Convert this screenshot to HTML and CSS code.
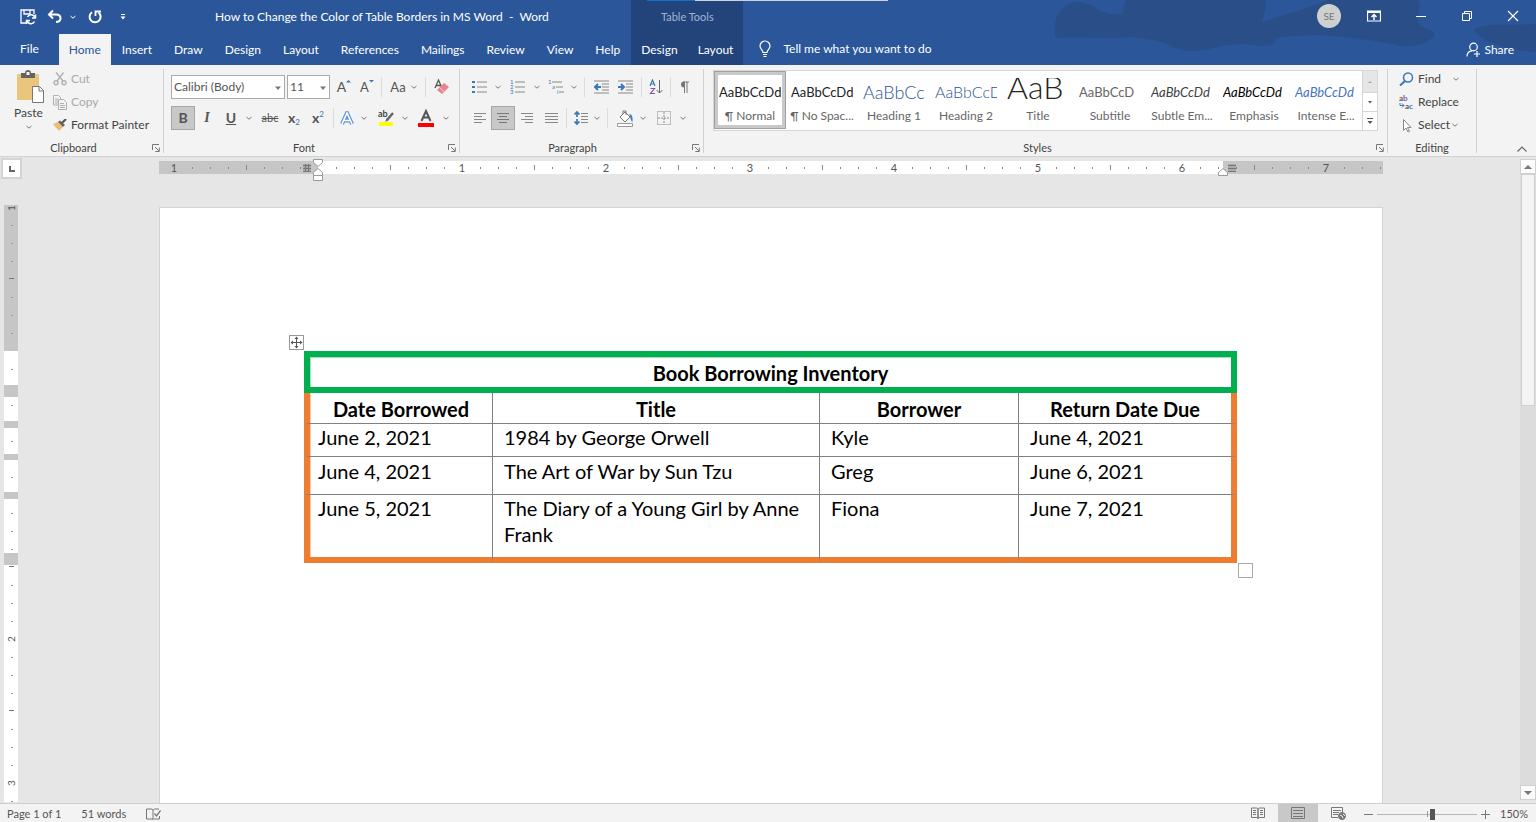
FILE: index.html
```html
<!DOCTYPE html>
<html lang="en">
<head>
<meta charset="utf-8">
<title>How to Change the Color of Table Borders in MS Word - Word</title>
<link rel="stylesheet" href="styles.css">
</head>
<body>
<svg class="defs" aria-hidden="true">
  <symbol id="chev" viewBox="0 0 8 8"><path d="M1.500 3L4 5.200 6.500 3" fill="none" stroke="currentColor" stroke-width="1"/></symbol>
  <symbol id="launch" viewBox="0 0 8 8"><path d="M.5 6V.5H7M3 3l4 4M7.300 3.500v4h-4" fill="none" stroke="#777"/></symbol>
  <symbol id="tri" viewBox="0 0 8 8"><path d="M1 2.500h6L4 6z" fill="currentColor"/></symbol>
</svg>

<header class="header">
  <svg class="clouds" width="500" height="65" aria-hidden="true">
    <path d="M20 38C15 20 25 2 42 2s22 14 40 12c14-2 26 6 24 20-20 8-60 2-86 4zM90 0h140c0 20-10 26-4 34 18 4 20 12-4 12-20-4-36 0-52 4-20 2-30 0-38-6-18-6-36-6-52-10zM216 44c4-14 10-16 6-20 20-8 40-12 70-24h90c6 14-8 20 6 28 10 2 14 6 8 10-10 10-30 10-40 6-20-4-40-6-60-8-20-2-60 0-80 8zM438 30c8-8 30-4 62-6v28c-30-2-54-10-62-22z" fill="#2b4b80" opacity=".7"/>
  </svg>
  <div class="title-bar">
    <div class="quick">
      <button aria-label="Save"><svg width="18" height="18" viewBox="0 0 18 18" fill="none" stroke="#fff" stroke-width="1.300"><path d="M7 15H2V2h13v4M5 2v4h6V2"/><path d="M16 10a4 4 0 0 0-7.500-1M8 12.500a4 4 0 0 0 7.500 1M16.500 6.500V10H13M7.500 16v-3.500H11" stroke-width="1.500"/></svg></button>
      <button aria-label="Undo"><svg width="16" height="16" viewBox="0 0 16 16" fill="none" stroke="#fff" stroke-width="2"><path d="M6 1.500L2 5.500l4 4M2.500 5.500H9c6 0 6 7.500 0 7.500"/></svg></button>
      <button class="mini" aria-label="Undo history"><svg width="8" height="8"><use href="#chev"/></svg></button>
      <button aria-label="Repeat"><svg width="16" height="16" viewBox="0 0 16 16" fill="none" stroke="#fff" stroke-width="2"><path d="M11.500 3.500A5.500 5.500 0 1 1 5 3.300"/><path d="M8.500 7V2.500H14" stroke-width="1.800"/></svg></button>
      <button class="customize" aria-label="Customize toolbar"><svg width="8" height="8" viewBox="0 0 8 8"><path d="M2 1.500h4" stroke="#fff"/><path d="M1.500 3.500h5L4 6.500z" fill="#fff"/></svg></button>
    </div>
    <h1 class="doc-title">How to Change the Color of Table Borders in MS Word &nbsp;-&nbsp; Word</h1>
  </div>
  <div class="context-title">Table Tools</div>
  <div class="window">
    <button class="avatar">SE</button>
    <button aria-label="Ribbon display options"><svg width="14" height="12" viewBox="0 0 14 12" fill="none" stroke="#fff"><path d="M.5 1h13v10H.5z" stroke-width="1.200"/><path d="M1 2h12" stroke-width="2"/><path d="M7 10V5M4.500 7L7 4.500 9.500 7" stroke-width="1.500"/></svg></button>
    <button aria-label="Minimize"><svg width="12" height="12"><path d="M1 6.500h10" stroke="#fff"/></svg></button>
    <button aria-label="Restore"><svg width="12" height="12" fill="none" stroke="#fff"><path d="M1.500 3.500h7v7h-7zM3.500 3.500v-2h7v7h-2"/></svg></button>
    <button aria-label="Close"><svg width="12" height="12"><path d="M1 1l10 10M11 1L1 11" stroke="#fff" stroke-width="1.200"/></svg></button>
  </div>
  <nav class="tabs">
    <button class="file">File</button><button class="active">Home</button><button>Insert</button><button>Draw</button><button>Design</button><button>Layout</button><button>References</button><button>Mailings</button><button>Review</button><button>View</button><button>Help</button>
  </nav>
  <nav class="tabs context-tabs"><button>Design</button><button>Layout</button></nav>
  <div class="tell">
    <label for="tell"><svg width="14" height="18" viewBox="0 0 14 18" fill="none" stroke="#fff" stroke-width="1.200"><path d="M5 12.500c0-2.500-3-3.500-3-6.500a5 5 0 0 1 10 0c0 3-3 4-3 6.500zM5 14.500h4M5.500 16.500h3"/></svg></label>
    <input id="tell" placeholder="Tell me what you want to do" aria-label="Tell me what you want to do">
    <button class="share"><svg width="15" height="16" viewBox="0 0 15 16" fill="none" stroke="#fff" stroke-width="1.200"><circle cx="7.500" cy="5" r="3.800"/><path d="M1 14.500c0-3.500 2-5.500 5-5.700M11 9v6M8 12h6"/></svg>Share</button>
  </div>
</header>

<main class="ribbon">
  <section class="group clipboard">
    <div class="group-body">
      <button class="paste"><svg width="30" height="34" viewBox="0 0 30 34"><rect x="1" y="4" width="22" height="26" rx="1" fill="#ecc57c"/><path d="M5 3h4a3 3 0 0 1 6 0h4v5H5z" fill="#646464"/><rect x="10.500" y="2" width="3" height="3" fill="#f3f3f3"/><path d="M16.500 16.500h7l4 4v12h-11z" fill="#fff" stroke="#777"/><path d="M23 16.500v4.500h4.500" fill="none" stroke="#777"/></svg><span>Paste</span><svg width="8" height="8"><use href="#chev"/></svg></button>
      <div class="stack">
        <button disabled><svg width="14" height="14" viewBox="0 0 14 14" fill="none" stroke="#b0b0b0" stroke-width="1.400"><path d="M3 .5L10 9M10.500.5L4 9"/><circle cx="3" cy="10.800" r="2"/><circle cx="11" cy="10.800" r="2"/></svg>Cut</button>
        <button disabled><svg width="14" height="15" viewBox="0 0 14 15" fill="#f3f3f3" stroke="#b0b0b0"><path d="M.5.5h5l2 2V10h-7zM2 4h3M2 6h3M2 8h3"/><path d="M5.500 4.500h5l3 3v7h-8zM7 8.500h4M7 10.500h5M7 12.500h5"/></svg>Copy</button>
        <button><svg width="14" height="12" viewBox="0 0 14 12"><path d="M0 5l5-2 5 5-4 4z" fill="#ecbb72"/><path d="M5 3l2-1.500 5 4.500-2 2z" fill="#666"/><path d="M9 4l4-4" stroke="#555" stroke-width="2.200"/></svg>Format Painter</button>
      </div>
    </div>
    <footer>Clipboard<button aria-label="Clipboard settings"><svg width="8" height="8"><use href="#launch"/></svg></button></footer>
  </section>

  <section class="group font">
    <div class="group-body rows">
      <div class="row font-top">
        <span class="combo"><select aria-label="Font"><option>Calibri (Body)</option></select><svg width="8" height="8"><use href="#tri"/></svg></span>
        <span class="combo"><select aria-label="Font size"><option>11</option></select><svg width="8" height="8"><use href="#tri"/></svg></span>
        <button aria-label="Grow font" class="glyph">A<sup><svg width="5" height="4"><path d="M0 3.500h5L2.500 1z" fill="#3a78b8"/></svg></sup></button>
        <button aria-label="Shrink font" class="glyph small">A<sup><svg width="5" height="4"><path d="M0 1h5L2.500 3.500z" fill="#3a78b8"/></svg></sup></button>
        <i class="sep"></i>
        <button class="glyph small">Aa</button><button class="mini" aria-label="Case options"><svg width="8" height="8"><use href="#chev"/></svg></button>
        <i class="sep"></i>
        <button aria-label="Clear formatting"><svg width="16" height="18" viewBox="0 0 16 18"><path d="M1 10L4.500 2 8 10M2.200 7.500h4.600" fill="none" stroke="#555" stroke-width="1.300"/><path d="M3 12l7-7 5 4-7 7z" fill="#e8828e"/><path d="M5.500 9.500l5 4.500" stroke="#f6cdd2"/></svg></button>
      </div>
      <div class="row font-bottom">
        <button class="glyph pressed"><b>B</b></button>
        <button class="glyph serif"><b><em>I</em></b></button>
        <button class="glyph"><b><u>U</u></b></button><button class="mini" aria-label="Underline options"><svg width="8" height="8"><use href="#chev"/></svg></button>
        <button class="glyph tiny"><s>abc</s></button>
        <button class="glyph small"><b>x</b><sub>2</sub></button>
        <button class="glyph small"><b>x</b><sup>2</sup></button>
        <i class="sep"></i>
        <button aria-label="Text effects"><svg width="14" height="15" viewBox="0 0 14 15"><path d="M2 13L7 2l5 11M4 9.500h6" fill="none" stroke="#5b95d3" stroke-width="4"/><path d="M2 13L7 2l5 11M4 9.500h6" fill="none" stroke="#fff" stroke-width="1.600"/></svg></button><button class="mini" aria-label="Text effect options"><svg width="8" height="8"><use href="#chev"/></svg></button>
        <button class="swatch" aria-label="Highlight"><svg width="18" height="18" viewBox="0 0 18 18"><rect x="2" y="13" width="14" height="4" fill="#ff0"/><text x="1" y="8" font-size="9" fill="#444">ab</text><path d="M16 4l-6 7" stroke="#666" stroke-width="2.500"/><path d="M10 9l2 2-4 2z" fill="#666"/></svg></button><button class="mini" aria-label="Highlight colors"><svg width="8" height="8"><use href="#chev"/></svg></button>
        <button class="swatch" aria-label="Font color"><svg width="18" height="18" viewBox="0 0 18 18"><rect x="1" y="14" width="16" height="4" fill="#f00"/><path d="M4.500 12L9 2l4.500 10M6 8.500h6" fill="none" stroke="#555" stroke-width="2"/></svg></button><button class="mini" aria-label="Font colors"><svg width="8" height="8"><use href="#chev"/></svg></button>
      </div>
    </div>
    <footer>Font<button aria-label="Font settings"><svg width="8" height="8"><use href="#launch"/></svg></button></footer>
  </section>

  <section class="group paragraph">
    <div class="group-body rows">
      <div class="row para-top">
        <button aria-label="Bullets"><svg width="16" height="14" viewBox="0 0 16 14"><path d="M0 1h3v2H0zM0 6h3v2H0zM0 11h3v2H0z" fill="#3a78b8"/><path d="M5 2h10M5 7h10M5 12h10" stroke="#888"/></svg></button><button class="mini" aria-label="Bullet options"><svg width="8" height="8"><use href="#chev"/></svg></button>
        <button aria-label="Numbering"><svg width="16" height="16" viewBox="0 0 16 16"><path d="M5 3h10M5 8h10M5 13h10" stroke="#888"/><g fill="#3a78b8" font-size="6"><text y="5">1</text><text y="10">2</text><text y="15">3</text></g></svg></button><button class="mini" aria-label="Numbering options"><svg width="8" height="8"><use href="#chev"/></svg></button>
        <button aria-label="Multilevel list"><svg width="16" height="16" viewBox="0 0 16 16"><path d="M4 3h10M8 8h7M11 13h5" stroke="#888"/><g fill="#3a78b8" font-size="6"><text y="5">1</text><text x="4" y="10">a</text><text x="9" y="15">i</text></g></svg></button><button class="mini" aria-label="List options"><svg width="8" height="8"><use href="#chev"/></svg></button>
        <i class="sep"></i>
        <button aria-label="Decrease indent"><svg width="16" height="14" viewBox="0 0 16 14"><path d="M0 1h15M8 4h7M8 7h7M8 10h7M0 13h15" stroke="#888"/><path d="M7 7H2M4 4L1 7l3 3" fill="none" stroke="#3a78b8" stroke-width="2"/></svg></button>
        <button aria-label="Increase indent"><svg width="16" height="14" viewBox="0 0 16 14"><path d="M0 1h15M8 4h7M8 7h7M8 10h7M0 13h15" stroke="#888"/><path d="M0 7h5M3 4l3 3-3 3" fill="none" stroke="#3a78b8" stroke-width="2"/></svg></button>
        <i class="sep"></i>
        <button aria-label="Sort"><svg width="14" height="16" viewBox="0 0 14 16" fill="none"><path d="M1 7l2.500-6L6 7M2 5h3" stroke="#3a78b8" stroke-width="1.200"/><path d="M1.500 9.500h4l-4 5h4.500" stroke="#8a55a5" stroke-width="1.200"/><path d="M10.500 1v13M7.500 11l3 3 3-3" stroke="#666"/></svg></button>
        <i class="sep"></i>
        <button aria-label="Show paragraph marks"><svg width="10" height="13" viewBox="0 0 10 13"><path d="M5.500 12V1M8 12V1M4 1h6" stroke="#777" fill="none"/><path d="M5 .5a3 3 0 0 0 0 6z" fill="#777"/></svg></button>
      </div>
      <div class="row para-bottom">
        <button aria-label="Align left"><svg width="12" height="12"><path d="M0 1.500h12M0 4.500h8M0 7.500h12M0 10.500h8" stroke="#888"/></svg></button>
        <button aria-label="Center" class="pressed"><svg width="12" height="12"><path d="M0 1.500h12M2 4.500h8M0 7.500h12M2 10.500h8" stroke="#777"/></svg></button>
        <button aria-label="Align right"><svg width="12" height="12"><path d="M0 1.500h12M4 4.500h8M0 7.500h12M4 10.500h8" stroke="#888"/></svg></button>
        <button aria-label="Justify"><svg width="13" height="12"><path d="M0 1.500h13M0 4.500h13M0 7.500h13M0 10.500h13" stroke="#888"/></svg></button>
        <i class="sep"></i>
        <button aria-label="Line spacing"><svg width="14" height="16" viewBox="0 0 14 16"><path d="M3 2v5M3 9v5M.500 4.500L3 2l2.500 2.500M.500 11.500L3 14l2.500-2.500" fill="none" stroke="#3a78b8" stroke-width="1.700"/><path d="M7 3.500h7M7 6.500h7M7 9.500h7M7 12.500h7" stroke="#888"/></svg></button><button class="mini" aria-label="Spacing options"><svg width="8" height="8"><use href="#chev"/></svg></button>
        <i class="sep"></i>
        <button aria-label="Shading"><svg width="17" height="17" viewBox="0 0 17 17"><path d="M3 7l5-5 5 5-5 5zM6 4V1h3v4" fill="#fff" stroke="#777"/><path d="M12 4c3 0 4 3 3.500 8C13 10 14 7 12 4z" fill="#3a78b8"/><path d="M.500 13.500h15v3H.500z" fill="#fff" stroke="#999"/></svg></button><button class="mini" aria-label="Shading colors"><svg width="8" height="8"><use href="#chev"/></svg></button>
        <button aria-label="Borders"><svg width="15" height="14" fill="none" stroke="#888"><path d="M.5.5h13v13H.500z" stroke-dasharray="1 1"/><path d="M7 1v12M1 7h12" stroke-dasharray="2 1"/></svg></button><button class="mini" aria-label="Border options"><svg width="8" height="8"><use href="#chev"/></svg></button>
      </div>
    </div>
    <footer>Paragraph<button aria-label="Paragraph settings"><svg width="8" height="8"><use href="#launch"/></svg></button></footer>
  </section>

  <section class="group styles">
    <div class="gallery">
      <button class="selected"><span class="sample">AaBbCcDd</span><span>¶ Normal</span></button>
      <button><span class="sample">AaBbCcDd</span><span>¶ No Spac...</span></button>
      <button><span class="sample h1">AaBbCc</span><span>Heading 1</span></button>
      <button><span class="sample h2">AaBbCcD</span><span>Heading 2</span></button>
      <button><span class="sample big">AaB</span><span>Title</span></button>
      <button><span class="sample sub">AaBbCcD</span><span>Subtitle</span></button>
      <button><span class="sample subtle">AaBbCcDd</span><span>Subtle Em...</span></button>
      <button><span class="sample emph">AaBbCcDd</span><span>Emphasis</span></button>
      <button><span class="sample intense">AaBbCcDd</span><span>Intense E...</span></button>
      <div class="gallery-nav">
        <button disabled aria-label="Previous styles"><svg width="8" height="8"><path d="M2 5h4L4 3z" fill="#aaa"/></svg></button>
        <button aria-label="Next styles"><svg width="8" height="8"><path d="M2 3h4L4 5.500z" fill="#555"/></svg></button>
        <button aria-label="More styles"><svg width="8" height="8"><path d="M1 1.500h6" stroke="#555"/><path d="M1.500 4h5L4 7z" fill="#555"/></svg></button>
      </div>
    </div>
    <footer>Styles<button aria-label="Style settings"><svg width="8" height="8"><use href="#launch"/></svg></button></footer>
  </section>

  <section class="group editing">
    <div class="group-body stack">
      <button><svg width="15" height="14" viewBox="0 0 15 14" fill="none" stroke="#3a78b8"><circle cx="9" cy="5.500" r="4.500" stroke-width="1.500"/><path d="M6 9l-5 4.500" stroke-width="2"/></svg>Find<svg class="far" width="8" height="8"><use href="#chev"/></svg></button>
      <button><svg width="15" height="16" viewBox="0 0 15 16"><g font-size="8" font-weight="700"><text y="7" fill="#555">a<tspan fill="#8a55a5">b</tspan></text><text x="6" y="15" fill="#555">a<tspan fill="#3a78b8">c</tspan></text></g><path d="M1 9v2.500h4M3 9.500l2 2-2 2" fill="none" stroke="#3a78b8"/></svg>Replace</button>
      <button><svg width="15" height="15" viewBox="0 0 15 15"><path d="M4.500 1.500v11l2.500-2.500 2 4 1.500-.7-2-3.800h3.500z" fill="#fff" stroke="#888"/></svg>Select<svg class="near" width="8" height="8"><use href="#chev"/></svg></button>
    </div>
    <footer>Editing</footer>
  </section>
  <div class="collapse"><button aria-label="Collapse the ribbon"><svg width="12" height="8"><path d="M1.500 6.500L6 2l4.500 4.500" fill="none" stroke="#666" stroke-width="1.200"/></svg></button></div>
</main>

<div class="work">
  <div class="side">
    <button class="tab-stop" aria-label="Tab stop"><svg width="8" height="8"><path d="M2 1v5h5" fill="none" stroke="#666" stroke-width="2"/></svg></button>
    <svg class="vruler" width="14" height="100%">
      <defs><pattern id="vt" y="2" width="14" height="144" patternUnits="userSpaceOnUse"><path d="M7 18.500h2M7 36.500h2M7 54.500h2M7 90.500h2M7 108.500h2M7 126.500h2" stroke="#999"/><path d="M5 71.500h5" stroke="#777"/></pattern></defs>
      <rect width="14" height="100%" fill="#fff"/><rect width="14" height="146" fill="#c6c6c6"/>
      <rect width="14" height="100%" fill="url(#vt)"/>
      <path d="M0 180h14v12H0zM0 216h14v7H0zM0 249h14v6H0zM0 287h14v7H0zM0 348h14v12H0z" fill="#c6c6c6"/>
      <g font-size="10" fill="#555" text-anchor="middle"><text transform="translate(11 3)rotate(-90)">1</text><text transform="translate(11 434)rotate(-90)">2</text><text transform="translate(11 578)rotate(-90)">3</text></g>
    </svg>
  </div>
  <div class="canvas">
    <svg class="hruler" width="100%" height="24">
      <defs><pattern id="ht" x="15" width="144" height="24" patternUnits="userSpaceOnUse"><path d="M18.500 7v2M36.500 7v2M54.500 7v2M90.500 7v2M108.500 7v2M126.500 7v2" stroke="#888"/><path d="M72.500 5v5" stroke="#888"/></pattern></defs>
      <rect y="1" width="100%" height="13" fill="#c6c6c6"/><rect x="159" y="1" width="905" height="13" fill="#fff"/>
      <rect y="1" width="100%" height="13" fill="url(#ht)"/>
      <g font-size="11" fill="#555" text-anchor="middle"><text x="15" y="12">1</text><text x="303" y="12">1</text><text x="447" y="12">2</text><text x="591" y="12">3</text><text x="735" y="12">4</text><text x="879" y="12">5</text><text x="1023" y="12">6</text><text x="1167" y="12">7</text></g>
      <path d="M144 4h8v8h-8zM1069 4h8v8h-8z" fill="#aaa"/><path d="M144 5.500h8M144 8.500h8M144 11.500h8M146.500 4v8M149.500 4v8M1069 5.500h8M1069 8.500h8M1069 11.500h8" stroke="#777"/>
      <path d="M154.500-.5h9v3l-4.500 4-4.500-4zM154.500 15.500v-3l4.500-4 4.500 4v3zM154.500 15.500h9v5h-9zM1059.500 15.500v-3l4.500-4 4.500 4v3z" fill="#fff" stroke="#999"/>
    </svg>
    <article class="page">
      <div class="table-wrap">
        <button class="move" aria-label="Move table"><svg width="13" height="13" viewBox="0 0 13 13"><path d="M6.500 1v11M1 6.500h11" stroke="#555"/><path d="M4.500 3l2-2.500 2 2.500zM4.500 10l2 2.500 2-2.500zM3 4.500L.5 6.500l2.500 2zM10 4.500l2.500 2-2.500 2z" fill="#555"/></svg></button>
        <table>
          <colgroup><col class="c-date"><col class="c-title"><col class="c-who"><col></colgroup>
          <thead>
            <tr class="banner"><th colspan="4">Book Borrowing Inventory</th></tr>
            <tr><th>Date Borrowed</th><th>Title</th><th>Borrower</th><th>Return Date Due</th></tr>
          </thead>
          <tbody>
            <tr><td>June 2, 2021</td><td>1984 by George Orwell</td><td>Kyle</td><td>June 4, 2021</td></tr>
            <tr class="mid"><td>June 4, 2021</td><td>The Art of War by Sun Tzu</td><td>Greg</td><td>June 6, 2021</td></tr>
            <tr class="last"><td>June 5, 2021</td><td>The Diary of a Young Girl by Anne Frank</td><td>Fiona</td><td>June 7, 2021</td></tr>
          </tbody>
        </table>
        <span class="resize"></span>
      </div>
    </article>
  </div>
  <div class="scroll">
    <button aria-label="Scroll up"><svg width="8" height="8"><path d="M0 6h8L4 2z" fill="#777"/></svg></button>
    <div class="track"><div class="thumb"></div></div>
    <button aria-label="Scroll down"><svg width="8" height="8"><path d="M0 2h8L4 6z" fill="#777"/></svg></button>
  </div>
</div>

<footer class="status">
  <span>Page 1 of 1</span><span>51 words</span>
  <button aria-label="Proofing"><svg width="15" height="12" viewBox="0 0 15 12" fill="none" stroke="#777"><path d="M7 11H.500V1H5c1.500 0 2 .5 2 1.500V12M7 2.500C7 1.500 8 1 9 1h4M8 11h5.500V8"/><path d="M8.500 5.500l2 2.500 4-5.500" stroke-width="1.300"/></svg></button>
  <div class="views">
    <button aria-label="Read mode"><svg width="14" height="12" viewBox="0 0 14 12" fill="none" stroke="#777"><path d="M.5 1H5c1.500 0 2 .5 2 1.500V11.500c0-1-1-1-2-1H.500zM13.500 1H9c-1.500 0-2 .5-2 1.500V11.500c0-1 1-1 2-1h4.500zM2 3.500h3M2 5.500h3M2 7.500h3M9 3.500h3M9 5.500h3M9 7.500h3"/></svg></button>
    <button class="on" aria-label="Print layout"><svg width="14" height="12" fill="none" stroke="#777"><path d="M.5.5h13v11H.500zM2 3.500h10M2 6.500h10M2 9.500h10"/></svg></button>
    <button aria-label="Web layout"><svg width="15" height="13" viewBox="0 0 15 13" fill="none" stroke="#777"><path d="M7 10.500H.500v-10h11V5M2 3.500h8M2 5.500h6M2 7.500h5"/><circle cx="11" cy="9" r="3.500" fill="#777"/><path d="M9 8l2 1 1 2M12 7l2 2" stroke="#eee"/></svg></button>
  </div>
  <div class="zoom">
    <button aria-label="Zoom out"><svg width="9" height="9"><path d="M0 4.500h9" stroke="#777"/></svg></button>
    <input type="range" min="0" max="100" value="56" aria-label="Zoom">
    <button aria-label="Zoom in"><svg width="9" height="9"><path d="M0 4.500h9M4.500 0v9" stroke="#777"/></svg></button>
    <span>150%</span>
  </div>
</footer>
</body>
</html>
```
FILE: styles.css
```css
* { box-sizing: border-box; }
body {
  margin: 0; height: 100vh; display: flex; flex-direction: column; overflow: hidden;
  font: 12px/16px Lato, "Open Sans", sans-serif; color: #444; background: #e6e6e6;
}
button, input, select { font: inherit; color: inherit; border: 0; background: none; padding: 0; margin: 0; }
button { display: flex; align-items: center; justify-content: center; white-space: nowrap; }
svg { flex: none; display: block; }
.defs { display: none; }
.mini { width: 8px; }

/* header */
.header {
  position: relative; display: grid; grid-template-columns: auto auto 1fr; grid-template-rows: 33px 32px;
  background: #2b579a; color: #fff;
}
.header::after {
  content: ""; position: absolute; top: 0; left: 647px; width: 241px; height: 1px;
  background: linear-gradient(90deg, #0b70cf 48px, #cbd3dd 48px);
}
.clouds { position: absolute; right: 0; top: 0; }
.title-bar { display: flex; align-items: center; padding-left: 19px; }
.quick { display: flex; align-items: center; width: 120px; gap: 10px; }
.quick .mini { margin: 0 0 0 -4px; }
.quick .customize { margin-left: 6px; }
.doc-title { flex: 1; margin: 0; font-size: 12px; font-weight: 400; text-align: left; padding-left: 76px; }
.context-title { background: #22447a; color: #a0b4d4; font-size: 11px; display: flex; align-items: center; justify-content: center; }
.window { position: relative; display: flex; align-items: center; justify-content: flex-end; padding: 0 17px 2px; gap: 34px; }
.avatar { width: 24px; height: 24px; border-radius: 50%; background: #d0d0d0; color: #777; font-size: 10px; margin-right: -8px; }
.tabs { display: flex; }
.tabs button { padding: 2px 11px 0; }
.tabs .file { padding: 0 20px; }
.tabs .active { background: #f3f3f3; color: #2b579a; margin-top: 1px; padding: 1px 10px 0; }
.context-tabs { background: #22447a; }
.context-tabs button { padding: 2px 10px 0; }
.tell { position: relative; display: flex; align-items: center; padding: 0 22px 0 15px; }
.tell input { flex: 1; padding-left: 11px; min-width: 0; }
.tell input::placeholder { color: #fff; opacity: 1; }
.share { gap: 3px; padding-top: 2px; }

/* ribbon */
.ribbon { display: flex; background: #f3f3f3; border-bottom: 1px solid #d2d2d2; height: 92px; padding: 4px 0 3px; color: #444; }
.ribbon .mini, .ribbon use { color: #777; }
.group { display: flex; flex-direction: column; border-right: 1px solid #d0d0d0; }
.group-body { flex: 1; }
.group > footer { position: relative; font-size: 11px; text-align: center; line-height: 10px; margin-top: auto; }
.group > footer button { position: absolute; right: 3px; top: 1px; }
.clipboard { width: 164px; }
.clipboard > footer { padding-right: 16px; }
.clipboard .group-body { display: flex; }
.paste { flex-direction: column; width: 57px; justify-content: flex-start; padding-top: 1px; }
.paste span { line-height: 17px; }
.paste svg:first-child { margin-left: 4px; }
.paste svg:last-child { margin-top: 2px; }
.stack { display: flex; flex-direction: column; gap: 7px; padding-top: 2px; align-items: flex-start; }
.stack button { gap: 4px; height: 16px; }
.clipboard .stack { margin-left: -4px; }
.stack button:disabled { color: #aaa; }
.rows { display: flex; flex-direction: column; gap: 7px; padding-top: 6px; }
.row { display: grid; height: 24px; align-items: center; justify-items: center; color: #555; }
.row > button { height: 24px; }
.sep { width: 1px; height: 20px; background: #dcdcdc; }
.font { width: 296px; padding-left: 7px; }
.paragraph { width: 244px; padding-left: 8px; }
.paragraph > footer { padding-right: 26px; }
.font > footer { padding-right: 22px; }
.font-top { grid-template-columns: 115px 44px 28px 18px 10px 24px 8px 14px 20px; }
.font-bottom { grid-template-columns: 24px 24px 24px 12px 30px 18px 30px 1px 26px 8px 36px 2px 40px 0; }
.para-top { grid-template-columns: 24px 12px 28px 10px 28px 8px 12px 24px 24px 6px 24px 4px 24px; }
.para-bottom { grid-template-columns: 23px 24px 24px 24px 6px 24px 8px 12px 24px 12px 30px 8px; }
.combo { position: relative; justify-self: start; background: #fff; border: 1px solid #ababab; height: 24px; width: 114px; }
.combo + .combo { width: 43px; margin-left: 1px; }
.combo select { appearance: none; width: 100%; height: 22px; padding-left: 2px; }
.combo svg { position: absolute; right: 2px; top: 8px; color: #666; pointer-events: none; }
.glyph { font-size: 14px; }
.glyph.small { font-size: 13px; }
.glyph.tiny { font-size: 11px; }
.glyph b { font-size: 14px; }
.serif { font-family: "Liberation Serif", serif; }
.glyph sup, .glyph sub { font-size: 8px; line-height: 8px; color: #3a78b8; align-self: flex-start; margin-top: 4px; }
.glyph sub { align-self: flex-end; margin: 0 0 4px; }
.pressed { background: #c8c8c8; border: 1px solid #a6a6a6; width: 24px; }
.swatch text { font-weight: 700; }

.styles { flex: 1; min-width: 0; padding: 1px 9px 0; }
.styles > footer { padding-right: 16px; }
.styles > footer button { right: -6px; }
.gallery { display: flex; background: #fff; border: 1px solid #d6d6d6; height: 61px; }
.gallery > button {
  flex: 1; min-width: 0; flex-direction: column; justify-content: flex-start; padding: 7px 5px 0;
  color: #666;
}
.gallery > .selected { border: 1px solid #a0a0a0; box-shadow: inset 0 0 0 3px #c9c9c9; height: 58px; padding: 6px 4px 0; }
.sample { width: 100%; height: 26px; line-height: 28px; font-size: 13px; overflow: hidden; color: #222; text-align: left; margin-bottom: 4px; }
.sample.h1 { font-size: 18px; font-weight: 300; color: #2f5496; }
.sample.h2 { font-size: 16px; font-weight: 300; color: #2f5496; }
.sample.big { font-size: 32px; line-height: 18px; font-weight: 300; }
.sample.sub { color: #666; }
.sample.subtle { font-style: italic; color: #404040; }
.sample.emph { font-style: italic; color: #000; }
.sample.intense { font-style: italic; color: #4472c4; }
.gallery-nav { width: 15px; display: grid; grid-template-rows: 21px 19px 19px; border-left: 1px solid #d6d6d6; }
.gallery-nav button + button { border-top: 1px solid #d6d6d6; }
.gallery-nav button:disabled { background: #e6e6e6; }
.editing { width: 89px; }
.editing .stack { padding-left: 11px; }
.far { margin-left: 7px; }
.near { margin-left: -3px; }
.collapse { width: 59px; display: flex; align-items: flex-end; justify-content: flex-end; padding-right: 8px; }

/* document area */
.work { flex: 1; min-height: 0; display: flex; }
.side { width: 22px; display: flex; flex-direction: column; padding: 1px 0 1px 1px; }
.tab-stop { width: 21px; height: 21px; background: #fff; border: 2px solid #d4d4d4; flex: none; }
.vruler { flex: 1; min-height: 0; margin: 26px 0 0 3px; }
.canvas { flex: 1; min-width: 0; display: flex; flex-direction: column; align-items: center; padding: 3px 16px 0; }
.hruler { max-width: 1224px; overflow: visible; }
.page { flex: 1; width: 100%; max-width: 1224px; margin-top: 23px; background: #fff; border: 1px solid #d4d4d4; border-bottom: 0; padding: 143px 145px 0 144px; }
.table-wrap { position: relative; }
.move { position: absolute; left: -15px; top: -16px; width: 15px; height: 15px; border: 1px solid #999; background: #fff; }
.resize { position: absolute; right: -16px; bottom: -15px; width: 15px; height: 15px; border: 1px solid #aaa; background: #fff; }
table { width: 100%; table-layout: fixed; border-spacing: 0; font-size: 20px; line-height: 26px; color: #000; }
.c-date { width: 189px; }
.c-title { width: 327px; }
.c-who { width: 199px; }
th, td { vertical-align: top; border: 0 solid #808080; border-width: 0 1px 1px 0; text-align: left; padding: 0 0 0 11px; height: 33px; }
th { text-align: center; padding: 3px 0 0; height: 31px; }
td:first-child { padding-left: 8px; }
tr > :first-child { border-left: 6px solid #ed7d31; box-shadow: inset 1px 0 #f8cbad; }
tr > :last-child { border-right: 6px solid #ed7d31; }
.banner th { border: 6px solid #00b050; height: 42px; padding-top: 3px; box-shadow: inset 1px 1px #a6dfbd; }
.banner th:first-child { border-color: #00b050; }
.mid td { height: 38px; padding-top: 1px; }
.last td { height: 68px; border-bottom: 6px solid #ed7d31; }

.scroll { width: 16px; display: flex; flex-direction: column; padding: 2px 0 3px; }
.scroll button { height: 15px; background: #fcfcfc; border: 1px solid #d0d0d0; }
.track { flex: 1; background: #dcdcdc; padding: 0 1px; }
.thumb { height: 38%; background: #f3f3f3; border: 1px solid #d0d0d0; }

/* status bar */
.status { display: flex; align-items: center; height: 19px; background: #f3f3f3; border-top: 1px solid #cfcfcf; font-size: 11px; padding: 2px 8px 0 7px; gap: 20px; color: #555; }
.views { display: flex; margin-left: auto; align-self: stretch; margin-top: -2px; }
.views button { width: 40px; }
.views .on { background: #c8c8c8; }
.zoom { display: flex; align-items: center; gap: 4px; margin-left: -14px; }
.zoom span { margin-left: 6px; }
.zoom input { appearance: none; width: 100px; height: 12px; background: linear-gradient(#999, #999) 50px 50% / 1px 6px no-repeat, linear-gradient(#b5b5b5, #b5b5b5) 0 50% / 100% 1px no-repeat; }
.zoom input::-webkit-slider-thumb { appearance: none; width: 5px; height: 11px; background: #555; }
```
